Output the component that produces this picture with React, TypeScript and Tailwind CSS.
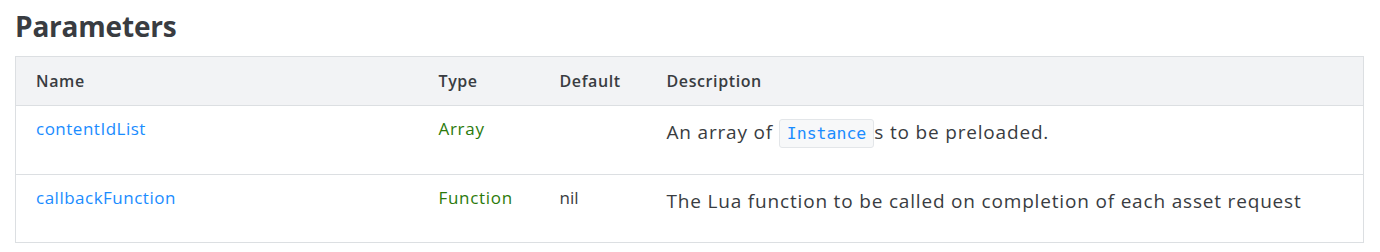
import React from "react";

type Param = {
  name: string;
  type: string;
  def?: string;
  desc: React.ReactNode;
};

const params: Param[] = [
  {
    name: "contentIdList",
    type: "Array",
    desc: (
      <>
        An array of{" "}
        <code className="inline-block rounded-[3px] border border-[#e3e6e9] bg-[#f7f8f9] px-[7px] py-[2px] font-['DejaVu_Sans_Mono',monospace] text-[16.5px] leading-[23px] tracking-normal text-[#1a8cff]">
          Instance
        </code>
        s to be preloaded.
      </>
    ),
  },
  {
    name: "callbackFunction",
    type: "Function",
    def: "nil",
    desc: "The Lua function to be called on completion of each asset request",
  },
];

export default function App() {
  return (
    <div className="bg-white px-[15px] pt-[6px] font-['Open_Sans',sans-serif] text-[#393c41]">
      <h2 className="text-[28px] font-bold leading-[40px] tracking-[-0.2px]">Parameters</h2>
      <table className="mt-[10px] w-[1349px] table-fixed border-collapse border border-[#dcdfe2]">
        <colgroup>
          <col className="w-[403px]" />
          <col className="w-[121px]" />
          <col className="w-[107px]" />
          <col />
        </colgroup>
        <thead>
          <tr className="h-[49px] bg-[#f2f3f5] text-left text-[16px] tracking-[0.6px]">
            <th className="px-[20px] font-semibold">Name</th>
            <th className="px-[20px] font-semibold">Type</th>
            <th className="px-[20px] font-semibold">Default</th>
            <th className="px-[20px] font-semibold">Description</th>
          </tr>
        </thead>
        <tbody>
          {params.map((p, i) => (
            <tr key={p.name} className={`border-t border-[#dcdfe2] align-top ${i === 0 ? "h-[69px]" : "h-[68px]"}`}>
              <td className="px-[20px] pt-[12px] text-[17px] leading-[22px] tracking-[0.5px] text-[#1a8cff]">{p.name}</td>
              <td className="px-[20px] pt-[12px] text-[17px] leading-[22px] tracking-[0.7px] text-[#2b7a0b]">{p.type}</td>
              <td className="px-[20px] pt-[12px] text-[17px] leading-[22px]">{p.def}</td>
              <td className="px-[20px] pt-[12px] text-[19px] leading-[28px] tracking-[0.82px]">{p.desc}</td>
            </tr>
          ))}
        </tbody>
      </table>
    </div>
  );
}
